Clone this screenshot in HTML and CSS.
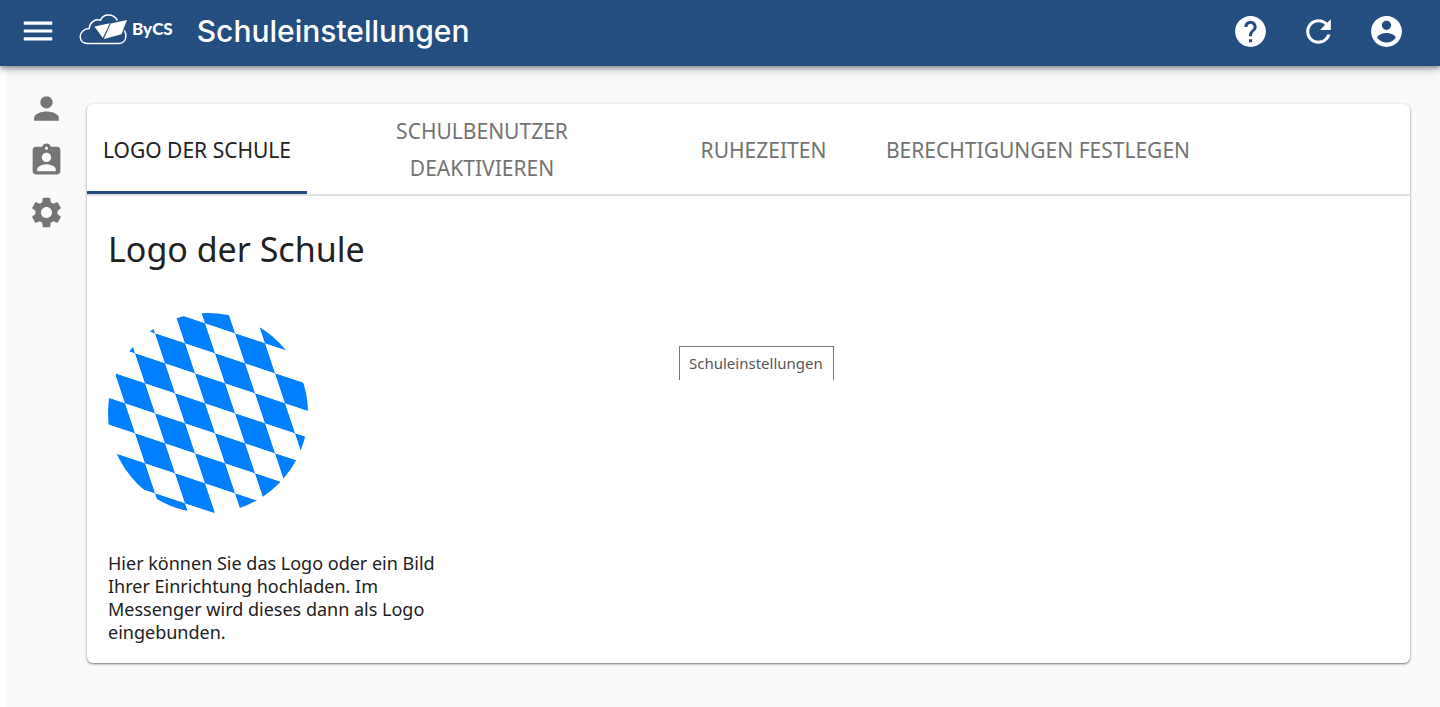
FILE: index.html
```html
<!DOCTYPE html>
<html lang="de">
<head>
  <meta charset="UTF-8" />
  <meta name="viewport" content="width=device-width, initial-scale=1.0"/>
  <title>Schuleinstellungen</title>
  <link rel="stylesheet" href="styles.css">
</head>
<body>
  <header class="app-bar">
    <button type="button" class="icon-btn menu-btn" aria-label="Menü">
      <svg width="38" height="38" viewBox="0 0 24 24"><path d="M3 18h18v-2H3v2zm0-5h18v-2H3v2zm0-7v2h18V6H3z"/></svg>
    </button>
    <a href="#" class="brand">
      <svg class="brand-logo" width="50" height="32" viewBox="0 0 50 32" aria-hidden="true">
        <path class="cloud" d="M38.500 5.500C36.500 2 33 0 29.500 0C25.500 0 22.500 2.500 21.500 5.200C15.500 3.500 10.500 8 10.200 13.500C5 13.500 1.200 17.500 1.200 21.500C1.200 26 4.500 28.500 8.500 28.500H39.500C43.500 28.500 46.500 26 46.800 22C47 19.500 46.500 17.500 45.500 15.500"/>
        <path class="book" d="M15.500 11.500L30.800 8.200L23.800 23Z"/>
        <path class="book" d="M31.800 8.500L48 5L42.500 19.200L24.800 24Z"/>
      </svg>
      <span class="brand-name">ByCS</span>
    </a>
    <h1>Schuleinstellungen</h1>
    <div class="actions">
      <button type="button" class="icon-btn" aria-label="Hilfe">
        <svg width="37" height="37" viewBox="0 0 24 24"><path d="M12 2C6.480 2 2 6.480 2 12s4.480 10 10 10 10-4.480 10-10S17.520 2 12 2zm1 17h-2v-2h2v2zm2.070-7.750l-.9.920C13.450 12.900 13 13.500 13 15h-2v-.5c0-1.100.450-2.100 1.170-2.830l1.240-1.260c.370-.360.590-.860.590-1.410 0-1.100-.9-2-2-2s-2 .9-2 2H8c0-2.210 1.790-4 4-4s4 1.790 4 4c0 .880-.360 1.680-.930 2.250z"/></svg>
      </button>
      <button type="button" class="icon-btn" aria-label="Aktualisieren">
        <svg width="37" height="37" viewBox="0 0 24 24"><path d="M17.650 6.350C16.200 4.900 14.210 4 12 4c-4.420 0-7.990 3.580-7.990 8s3.570 8 7.990 8c3.730 0 6.840-2.550 7.730-6h-2.080c-.820 2.330-3.040 4-5.650 4-3.310 0-6-2.690-6-6s2.690-6 6-6c1.660 0 3.140.690 4.220 1.780L13 11h7V4l-2.350 2.350z"/></svg>
      </button>
      <button type="button" class="icon-btn" aria-label="Konto">
        <svg width="37" height="37" viewBox="0 0 24 24"><path d="M12 2C6.480 2 2 6.480 2 12s4.480 10 10 10 10-4.480 10-10S17.520 2 12 2zm0 3c1.660 0 3 1.340 3 3s-1.340 3-3 3-3-1.340-3-3 1.340-3 3-3zm0 14.200c-2.500 0-4.710-1.280-6-3.220.030-1.990 4-3.080 6-3.080 1.990 0 5.970 1.090 6 3.080-1.290 1.940-3.500 3.220-6 3.220z"/></svg>
      </button>
    </div>
  </header>

  <div class="layout">
    <nav class="side-nav">
      <a href="#" aria-label="Profil">
        <svg width="37" height="37" viewBox="0 0 24 24"><path d="M12 12c2.210 0 4-1.790 4-4s-1.790-4-4-4-4 1.790-4 4 1.790 4 4 4zm0 2c-2.670 0-8 1.340-8 4v2h16v-2c0-2.660-5.330-4-8-4z"/></svg>
      </a>
      <a href="#" aria-label="Benutzerverwaltung">
        <svg width="37" height="37" viewBox="0 0 24 24"><path d="M19 3h-4.180C14.400 1.840 13.300 1 12 1c-1.300 0-2.400.840-2.820 2H5c-1.100 0-2 .9-2 2v14c0 1.100.9 2 2 2h14c1.100 0 2-.9 2-2V5c0-1.100-.9-2-2-2zm-7 0c.550 0 1 .450 1 1s-.450 1-1 1-1-.450-1-1 .450-1 1-1zm0 4c1.660 0 3 1.340 3 3s-1.340 3-3 3-3-1.340-3-3 1.340-3 3-3zm6 12H6v-1.400c0-2 4-3.100 6-3.100s6 1.100 6 3.100V19z"/></svg>
      </a>
      <a href="#" aria-label="Einstellungen">
        <svg width="37" height="37" viewBox="0 0 24 24"><path d="M19.140 12.940c.040-.3.060-.610.060-.940 0-.320-.020-.640-.070-.940l2.030-1.580c.180-.140.230-.410.120-.610l-1.920-3.320c-.120-.220-.370-.290-.590-.220l-2.390.960c-.5-.380-1.030-.7-1.620-.940l-.360-2.540c-.040-.240-.240-.410-.480-.410h-3.840c-.240 0-.430.170-.470.410l-.360 2.540c-.590.240-1.130.570-1.620.940l-2.390-.960c-.220-.080-.470 0-.590.220L2.740 8.870c-.120.210-.080.470.120.610l2.030 1.580c-.050.3-.090.630-.090.940s.020.640.070.940l-2.030 1.580c-.180.140-.230.410-.120.610l1.920 3.320c.120.220.370.290.590.220l2.390-.960c.5.380 1.030.7 1.620.940l.360 2.540c.050.240.240.410.480.410h3.840c.240 0 .440-.170.470-.410l.360-2.540c.590-.240 1.130-.560 1.620-.940l2.390.960c.220.080.470 0 .590-.220l1.920-3.320c.120-.220.070-.470-.120-.610l-2.010-1.580zM12 15.600c-1.980 0-3.600-1.620-3.600-3.600s1.620-3.600 3.600-3.600 3.600 1.620 3.600 3.600-1.620 3.600-3.600 3.600z"/></svg>
      </a>
    </nav>

    <main class="card">
      <div class="tabs" role="tablist">
        <button type="button" class="tab active" role="tab" aria-selected="true">Logo der Schule</button>
        <button type="button" class="tab tab-wide" role="tab">Schulbenutzer deaktivieren</button>
        <button type="button" class="tab" role="tab">Ruhezeiten</button>
        <button type="button" class="tab tab-last" role="tab">Berechtigungen festlegen</button>
      </div>

      <section class="panel">
        <h2>Logo der Schule</h2>
        <svg class="school-logo" width="200" height="200" viewBox="0 0 200 200" role="img" aria-label="Logo der Schule">
          <defs>
            <pattern id="rauten" width="60" height="60" patternUnits="userSpaceOnUse" patternTransform="matrix(1 .3333 .3333 1 47 20.300)">
              <rect width="30" height="30" fill="#0080ff"/>
              <rect x="30" y="30" width="30" height="30" fill="#0080ff"/>
            </pattern>
          </defs>
          <circle cx="100" cy="100" r="100" fill="url(#rauten)"/>
        </svg>
        <p>Hier können Sie das Logo oder ein Bild Ihrer Einrichtung hochladen. Im Messenger wird dieses dann als Logo eingebunden.</p>
      </section>
      <div class="tooltip" role="tooltip">Schuleinstellungen</div>
    </main>
  </div>
</body>
</html>
```
FILE: styles.css
```css
* {
  box-sizing: border-box;
}

body {
  display: flex;
  flex-direction: column;
  margin: 0;
  min-height: 100vh;
  font-family: "Noto Sans", sans-serif;
  background-color: #fafafa;
  color: #212121;
}

.app-bar {
  position: relative;
  display: flex;
  align-items: center;
  height: 66px;
  padding: 0 35px 4px 19px;
  background-color: #254e80;
  color: white;
  box-shadow: 0 2px 5px rgba(0,0,0,0.4), 0 4px 12px rgba(0,0,0,0.15);
}

.icon-btn {
  display: flex;
  padding: 0;
  border: none;
  background: none;
  color: white;
  cursor: pointer;
}

svg {
  display: block;
  fill: currentColor;
}

.brand {
  display: flex;
  align-items: flex-start;
  gap: 3px;
  margin-left: 22px;
  color: white;
  text-decoration: none;
}

.brand-logo {
  overflow: visible;
}

.cloud {
  fill: none;
  stroke: white;
  stroke-width: 1.5;
}

.brand-name {
  font-family: Lato, sans-serif;
  font-size: 17px;
  font-weight: 900;
  line-height: 28px;
}

h1 {
  margin: 0 0 0 24px;
  font-family: Inter, sans-serif;
  font-size: 30px;
  font-weight: 500;
  line-height: 40px;
}

.actions {
  display: flex;
  gap: 31px;
  margin-left: auto;
}

.layout {
  display: flex;
  flex: 1;
  align-items: flex-start;
  padding: 24px 30px 44px 0;
  border-left: 7px solid white;
}

.side-nav {
  display: flex;
  flex-direction: column;
  align-items: center;
  gap: 15px;
  width: 80px;
  padding-right: 2px;
  flex-shrink: 0;
}

.side-nav a {
  color: #757575;
}

.card {
  position: relative;
  flex: 1;
  margin-top: 14px;
  background-color: white;
  border-radius: 6px;
  box-shadow: 0 1px 2px rgba(0,0,0,0.45), 0 1px 4px rgba(0,0,0,0.12);
}

.tabs {
  display: flex;
  border-bottom: 2px solid #e0e0e0;
}

.tab {
  min-width: 213px;
  min-height: 90px;
  padding: 9px 14px 4px;
  border: none;
  border-bottom: 3px solid transparent;
  background: none;
  font-family: inherit;
  font-size: 21px;
  line-height: 37px;
  text-transform: uppercase;
  color: #737373;
  cursor: pointer;
}

.tab.active {
  width: 220px;
  color: #212121;
  border-bottom-color: #254e80;
}

.tab-wide {
  width: 350px;
  padding: 9px 40px 4px;
}

.tab-last {
  width: 336px;
}

.panel {
  padding: 28px 21px 19px;
}

h2 {
  margin: 0;
  font-size: 34px;
  font-weight: 400;
  line-height: 50px;
}

.school-logo {
  margin-top: 39px;
}

.panel p {
  max-width: 330px;
  margin: 39px 0 0;
  font-size: 18px;
  line-height: 23px;
}

/* floats over the panel */
.tooltip {
  position: absolute;
  top: 242px;
  left: 592px;
  padding: 0 10px 0 9px;
  border: 1px solid #767676;
  border-bottom: none;
  background-color: white;
  font-size: 15px;
  line-height: 33px;
  color: #575757;
}
```
